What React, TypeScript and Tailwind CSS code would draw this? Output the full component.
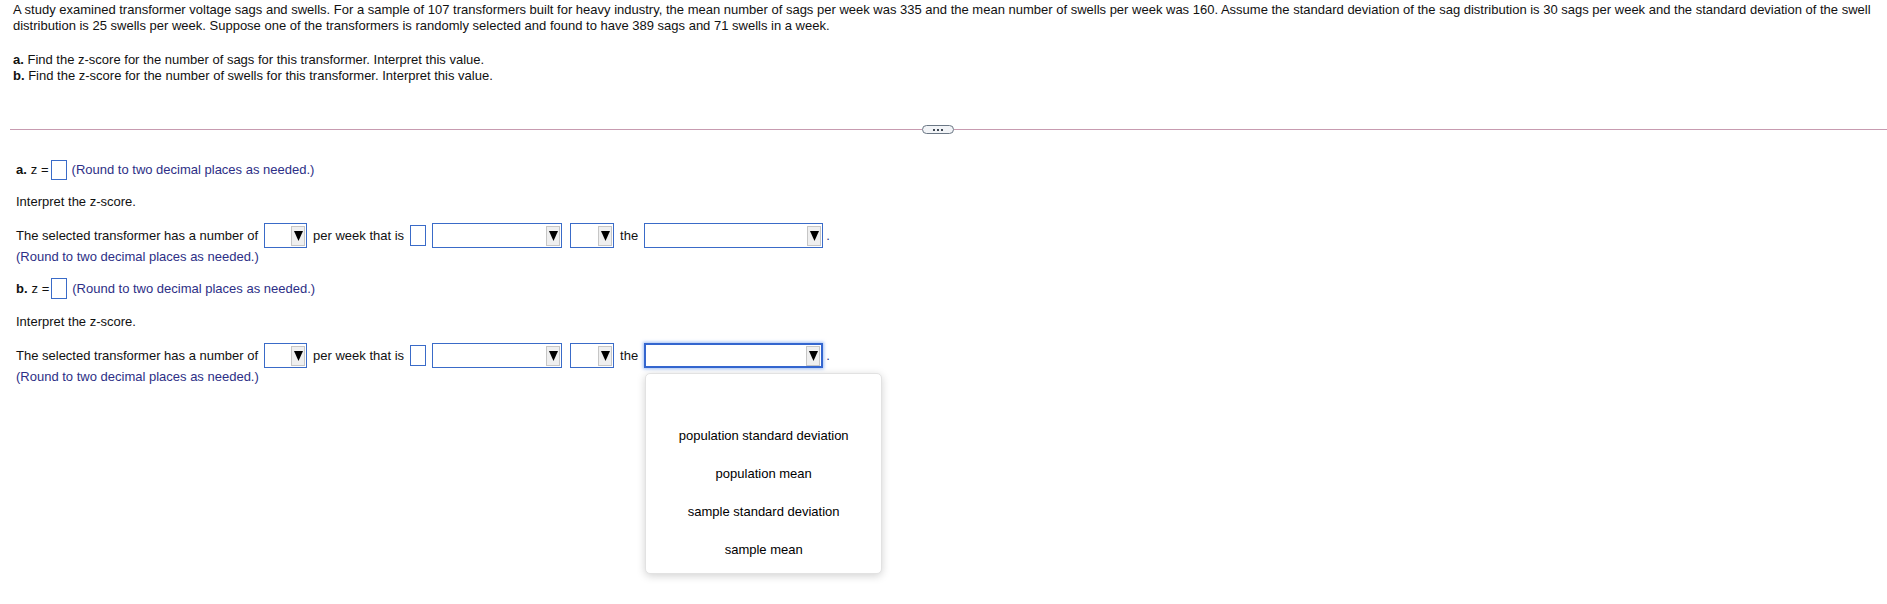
import React from 'react';
import clsx from 'clsx';

// Small dropdown with the grey arrow button at its right edge
function Drop({ w, focused, children }: { w: string; focused?: boolean; children?: React.ReactNode }) {
  return (
    <div
      className={clsx(
        'relative h-[25px] bg-white flex items-center justify-end pr-[1px]',
        w,
        focused
          ? 'border-2 border-[#3466cf] shadow-[0_0_3px_1px_rgba(90,140,235,0.55)]'
          : 'border border-[#3a6bc8]'
      )}
    >
      <div className="w-[14px] h-[20px] bg-[#efefef] border border-[#c6c6c6] flex items-center justify-center">
        <svg width="9" height="10" viewBox="0 0 9 10">
          <path d="M0 0 L9 0 L4.5 10 Z" fill="#000" />
        </svg>
      </div>
      {children}
    </div>
  );
}

function Box({ h = 'h-[21px]', w = 'w-[16px]' }: { h?: string; w?: string }) {
  return <div className={clsx('border border-[#3a6bc8] bg-white', h, w)} />;
}

const OPTIONS = ['', 'population standard deviation', 'population mean', 'sample standard deviation', 'sample mean'];

function InterpretRow({ open }: { open?: boolean }) {
  return (
    <div className="mt-[13px] h-[25px] flex items-center">
      <span>The selected transformer has a number of</span>
      <div className="ml-[6px]">
        <Drop w="w-[43px]" />
      </div>
      <span className="ml-[6px]">per week that is</span>
      <div className="ml-[6px]">
        <Box />
      </div>
      <div className="ml-[6px]">
        <Drop w="w-[130px]" />
      </div>
      <div className="ml-[8px]">
        <Drop w="w-[44px]" />
      </div>
      <span className="ml-[6px]">the</span>
      <div className="ml-[6px]">
        <Drop w="w-[179px]" focused={open}>
          {open && (
            <div className="absolute left-[-1px] top-[28px] w-[237px] h-[201px] bg-white border border-[#e2e2e2] rounded-[5px] shadow-[0_2px_8px_rgba(0,0,0,0.18)] pt-[5px] pb-[6px] z-10">
              {OPTIONS.map((o, i) => (
                <div key={i} className="h-[38px] flex items-center justify-center text-[13px] text-black">
                  {o}
                </div>
              ))}
            </div>
          )}
        </Drop>
      </div>
      <span className="ml-[3px] text-[#2d2f86]">.</span>
    </div>
  );
}

function ZRow({ label, h }: { label: string; h: string }) {
  return (
    <div className={clsx('flex items-center', h)}>
      <b>{label}</b>
      <span className="ml-[4px]">z =</span>
      <div className="ml-[2px]">
        <Box h={h} w="w-[16px]" />
      </div>
      <span className="ml-[5px] text-[#2d2f86]">(Round to two decimal places as needed.)</span>
    </div>
  );
}

export default function App() {
  return (
    <div className="min-h-screen bg-white text-[#111] font-['Liberation_Sans',Arial,sans-serif]">
      {/* question text */}
      <div className="pl-[13px] pt-[2px] text-[13px] whitespace-nowrap">
        <p className="leading-[16px]">
          A study examined transformer voltage sags and swells. For a sample of 107 transformers built for heavy industry, the mean number
          of sags per week was 335 and the mean number of swells per week was 160. Assume the standard deviation of the sag distribution
          is 30 sags per week and the standard deviation of the swell
          <br />
          distribution is 25 swells per week. Suppose one of the transformers is randomly selected and found to have 389 sags and 71
          swells in a week.
        </p>
        <p className="mt-[18px] leading-[16px]">
          <b>a.</b> Find the z-score for the number of sags for this transformer. Interpret this value.
          <br />
          <b>b.</b> Find the z-score for the number of swells for this transformer. Interpret this value.
        </p>
      </div>

      {/* divider with the pill */}
      <div className="mt-[41px] h-[9px] flex items-center">
        <div className="ml-[10px] w-[912px] h-px bg-[#c79bb0]" />
        <div className="w-[32px] h-[9px] rounded-full border border-[#6b7785] bg-[#f2f4f7] flex items-center justify-center gap-[2px]">
          <span className="w-[2px] h-[2px] bg-[#3f4854]" />
          <span className="w-[2px] h-[2px] bg-[#3f4854]" />
          <span className="w-[2px] h-[2px] bg-[#3f4854]" />
        </div>
        <div className="flex-1 h-px bg-[#c79bb0]" />
      </div>

      {/* answers */}
      <div className="pl-[16px] mt-[26px] text-[13px]">
        <ZRow label="a." h="h-[20px]" />
        <div className="mt-[14px] leading-[16px]">Interpret the z-score.</div>
        <InterpretRow />
        <div className="mt-[1px] leading-[16px] text-[#2d2f86]">(Round to two decimal places as needed.)</div>

        <div className="mt-[13px]">
          <ZRow label="b." h="h-[21px]" />
        </div>
        <div className="mt-[15px] leading-[16px]">Interpret the z-score.</div>
        <InterpretRow open />
        <div className="mt-[1px] leading-[16px] text-[#2d2f86]">(Round to two decimal places as needed.)</div>
      </div>
    </div>
  );
}
